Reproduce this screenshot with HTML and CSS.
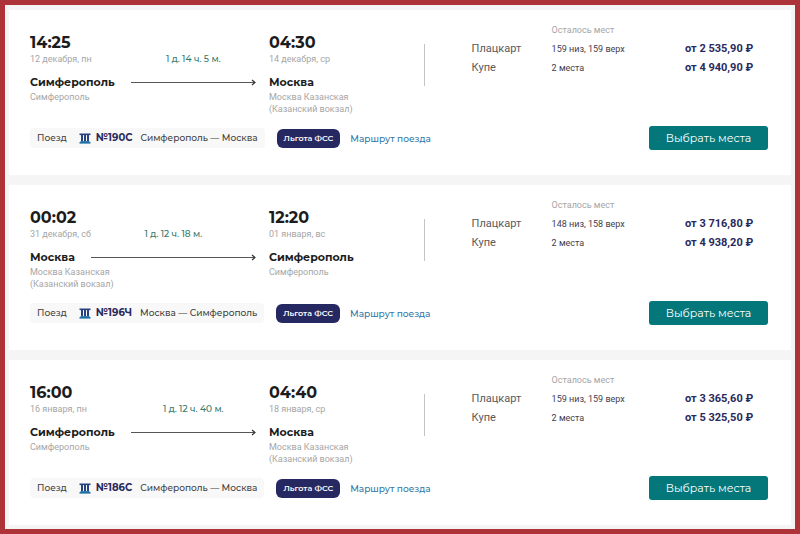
FILE: index.html
```html
<!DOCTYPE html>
<html lang="ru">
<head>
    <meta charset="UTF-8">
    <meta name="viewport" content="width=device-width, initial-scale=1.0">
    <title>Поезда Симферополь — Москва</title>
    <link rel="stylesheet" href="styles.css">
</head>
<body>
    <svg class="sprite" width="0" height="0" aria-hidden="true">
        <symbol id="columns" viewBox="0 0 12 11">
            <path d="M0.5 0.5h11v1.6h-11z" fill="#27427e"/>
            <path d="M2 2h2v6.500h-2zM5 2h2v6.500h-2zM8 2h2v6.500h-2z" fill="#27427e"/>
            <path d="M1.500 8h9v1h-9z" fill="#2b7fb0"/>
            <path d="M0.5 9h11v1.600h-11z" fill="#1f6fa5"/>
        </symbol>
        <symbol id="arrow-head" viewBox="0 0 5 7">
            <path d="M1 1l3 2.500l-3 2.500" fill="none" stroke="#333" stroke-width="1.200"/>
        </symbol>
    </svg>

    <main class="trips">
        <article class="trip">
            <div class="trip-info">
                <div class="route">
                    <div class="departure">
                        <div class="time">14:25</div>
                        <div class="leg">
                            <div class="date">12 декабря, пн</div>
                            <div class="duration">1 д. 14 ч. 5 м.</div>
                            <div class="city">Симферополь</div>
                            <div class="arrow"><svg class="arrow-head"><use href="#arrow-head"/></svg></div>
                        </div>
                        <div class="station">Симферополь</div>
                    </div>
                    <div class="arrival">
                        <div class="time">04:30</div>
                        <div class="date">14 декабря, ср</div>
                        <div class="city">Москва</div>
                        <div class="station">Москва Казанская<br>(Казанский вокзал)</div>
                    </div>
                </div>
                <div class="fares">
                    <table class="fare-table">
                        <tr><td class="col-class"></td><th class="col-seats">Осталось мест</th><td></td></tr>
                        <tr><td class="class">Плацкарт</td><td class="seats">159 низ, 159 верх</td><td class="price">от 2 535,90 ₽</td></tr>
                        <tr><td class="class">Купе</td><td class="seats">2 места</td><td class="price">от 4 940,90 ₽</td></tr>
                    </table>
                </div>
            </div>
            <div class="trip-footer">
                <div class="train">
                    <span>Поезд</span>
                    <svg class="train-icon"><use href="#columns"/></svg>
                    <b class="number">№190С</b>
                    <span>Симферополь — Москва</span>
                </div>
                <span class="badge">Льгота ФСС</span>
                <a class="route-link" href="#">Маршрут поезда</a>
                <button class="select-button" type="button">Выбрать места</button>
            </div>
        </article>

        <article class="trip">
            <div class="trip-info">
                <div class="route">
                    <div class="departure">
                        <div class="time">00:02</div>
                        <div class="leg">
                            <div class="date">31 декабря, сб</div>
                            <div class="duration">1 д. 12 ч. 18 м.</div>
                            <div class="city">Москва</div>
                            <div class="arrow"><svg class="arrow-head"><use href="#arrow-head"/></svg></div>
                        </div>
                        <div class="station">Москва Казанская<br>(Казанский вокзал)</div>
                    </div>
                    <div class="arrival">
                        <div class="time">12:20</div>
                        <div class="date">01 января, вс</div>
                        <div class="city">Симферополь</div>
                        <div class="station">Симферополь</div>
                    </div>
                </div>
                <div class="fares">
                    <table class="fare-table">
                        <tr><td class="col-class"></td><th class="col-seats">Осталось мест</th><td></td></tr>
                        <tr><td class="class">Плацкарт</td><td class="seats">148 низ, 158 верх</td><td class="price">от 3 716,80 ₽</td></tr>
                        <tr><td class="class">Купе</td><td class="seats">2 места</td><td class="price">от 4 938,20 ₽</td></tr>
                    </table>
                </div>
            </div>
            <div class="trip-footer">
                <div class="train">
                    <span>Поезд</span>
                    <svg class="train-icon"><use href="#columns"/></svg>
                    <b class="number">№196Ч</b>
                    <span>Москва — Симферополь</span>
                </div>
                <span class="badge">Льгота ФСС</span>
                <a class="route-link" href="#">Маршрут поезда</a>
                <button class="select-button" type="button">Выбрать места</button>
            </div>
        </article>

        <article class="trip">
            <div class="trip-info">
                <div class="route">
                    <div class="departure">
                        <div class="time">16:00</div>
                        <div class="leg">
                            <div class="date">16 января, пн</div>
                            <div class="duration">1 д. 12 ч. 40 м.</div>
                            <div class="city">Симферополь</div>
                            <div class="arrow"><svg class="arrow-head"><use href="#arrow-head"/></svg></div>
                        </div>
                        <div class="station">Симферополь</div>
                    </div>
                    <div class="arrival">
                        <div class="time">04:40</div>
                        <div class="date">18 января, ср</div>
                        <div class="city">Москва</div>
                        <div class="station">Москва Казанская<br>(Казанский вокзал)</div>
                    </div>
                </div>
                <div class="fares">
                    <table class="fare-table">
                        <tr><td class="col-class"></td><th class="col-seats">Осталось мест</th><td></td></tr>
                        <tr><td class="class">Плацкарт</td><td class="seats">159 низ, 159 верх</td><td class="price">от 3 365,60 ₽</td></tr>
                        <tr><td class="class">Купе</td><td class="seats">2 места</td><td class="price">от 5 325,50 ₽</td></tr>
                    </table>
                </div>
            </div>
            <div class="trip-footer">
                <div class="train">
                    <span>Поезд</span>
                    <svg class="train-icon"><use href="#columns"/></svg>
                    <b class="number">№186С</b>
                    <span>Симферополь — Москва</span>
                </div>
                <span class="badge">Льгота ФСС</span>
                <a class="route-link" href="#">Маршрут поезда</a>
                <button class="select-button" type="button">Выбрать места</button>
            </div>
        </article>
    </main>
</body>
</html>
```
FILE: styles.css
```css
* {
    box-sizing: border-box;
}
body {
    margin: 0;
    font-family: Montserrat, Inter, sans-serif;
    font-size: 11px;
    color: #1c1c1c;
    background-color: #f5f5f5;
}
.sprite {
    position: absolute;
}
.trips {
    display: flex;
    flex-direction: column;
    gap: 10px;
    min-height: 100vh;
    padding: 5px 4px 4px;
    border: 5px solid #ad3339;
}
.trip {
    padding: 0 23px 25px 21px;
    background-color: #fff;
}
.trip-info {
    display: grid;
    grid-template-columns: 8fr 7fr;
    min-height: 116px;
}
.route {
    display: grid;
    grid-template-columns: 17fr 11fr;
    padding-top: 23px;
}
.time {
    font-size: 16px;
    font-weight: 700;
    line-height: 20px;
}
.leg {
    display: grid;
    grid-template-columns: auto 1fr;
    column-gap: 16px;
    padding-right: 13px;
}
.date, .station {
    font-family: Roboto, sans-serif;
    font-size: 9px;
    line-height: 12px;
    color: #a6a6a6;
    white-space: nowrap;
}
/* long dates must not push the arrow away from the city name */
.leg .date {
    width: 0;
}
.duration {
    font-size: 9px;
    font-weight: 500;
    line-height: 12px;
    text-align: center;
    color: #35796a;
}
.city {
    margin-top: 9px;
    font-size: 11px;
    font-weight: 700;
    line-height: 16px;
}
.station {
    margin-top: 1px;
}
.arrow {
    display: flex;
    align-items: center;
    margin-top: 9px;
}
.arrow::before {
    content: "";
    flex: 1;
    height: 1px;
    margin-right: -4px;
    background-color: #555;
}
.arrow-head {
    width: 5px;
    height: 7px;
}
.fares {
    display: flex;
    align-items: flex-start;
    padding-top: 10px;
    font-family: Roboto, sans-serif;
}
.fares::before {
    content: "";
    width: 1px;
    height: 42px;
    margin-top: 24px;
    margin-right: 47px;
    background-color: #c4c4c4;
}
.fare-table {
    flex: 1;
    border-collapse: collapse;
    table-layout: fixed;
    line-height: 18px;
}
.fare-table td, .fare-table th {
    padding: 0;
    height: 19px;
    text-align: left;
    white-space: nowrap;
}
.fare-table th {
    font-size: 9px;
    font-weight: 400;
    color: #a6a6a6;
}
.fare-table .col-class {
    width: 27%;
}
.fare-table .col-seats {
    width: 45%;
}
.class {
    font-size: 11px;
    color: #5a5a5a;
}
.seats {
    font-size: 9px;
    color: #3e3e50;
}
.price {
    font-size: 11px;
    font-weight: 700;
    color: #2a2a5c;
}
.trip-footer {
    display: flex;
    align-items: center;
}
.train {
    display: flex;
    align-items: center;
    padding: 0 7px;
    font-size: 9px;
    font-weight: 500;
    line-height: 20px;
    color: #3f3f3f;
    background-color: #f8f8f8;
    border-radius: 4px;
}
.train-icon {
    width: 12px;
    height: 11px;
    margin: 0 5px 0 12px;
}
.number {
    margin-right: 8px;
    font-size: 10px;
    color: #2a2a5c;
}
.badge {
    margin-left: 12px;
    padding: 0 7px;
    font-size: 8px;
    font-weight: 600;
    line-height: 19px;
    color: #fff;
    background-color: #262861;
    border-radius: 6px;
}
.route-link {
    margin-left: 10px;
    font-size: 9px;
    font-weight: 500;
    color: #2f78a8;
    text-decoration: none;
}
.select-button {
    width: 119px;
    height: 24px;
    margin-left: auto;
    padding: 0;
    font-family: inherit;
    font-size: 11px;
    font-weight: 400;
    color: #fff;
    background-color: #04777a;
    border: none;
    border-radius: 3px;
    cursor: pointer;
}
```
